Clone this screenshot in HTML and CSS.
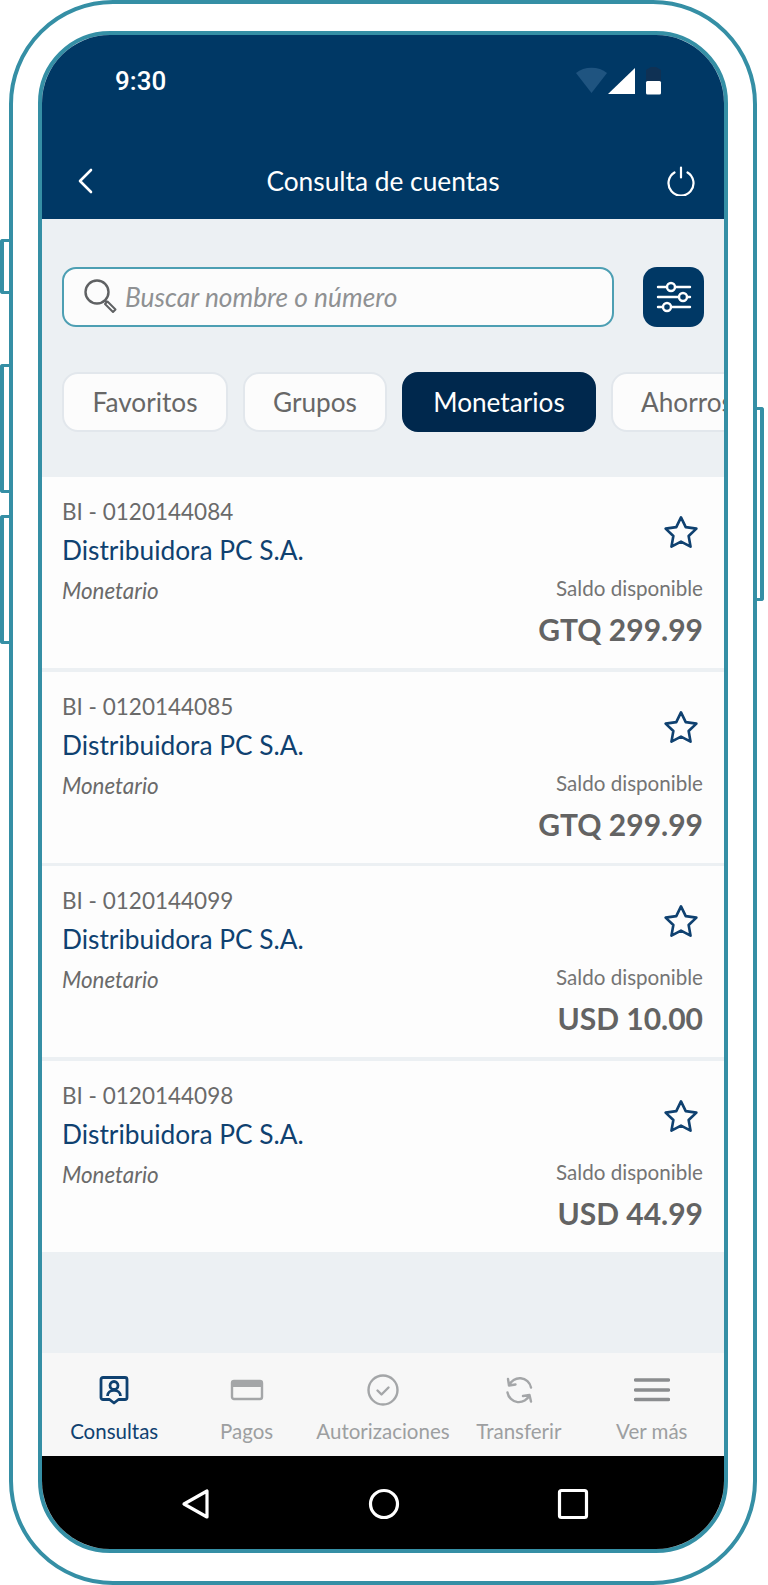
FILE: index.html
```html
<!DOCTYPE html>
<html lang="es">
<head>
    <meta charset="UTF-8">
    <meta name="viewport" content="width=device-width, initial-scale=1.0">
    <title>Consulta de cuentas</title>
    <link rel="stylesheet" href="styles.css">
</head>
<body>
    <div class="phone">
        <span class="side-btn side-left btn-a"></span>
        <span class="side-btn side-left btn-b"></span>
        <span class="side-btn side-left btn-c"></span>
        <span class="side-btn side-right btn-d"></span>

        <div class="screen">
            <header class="app-header">
                <div class="status-bar">
                    <span class="time">9:30</span>
                    <svg class="status-icons" width="87" height="28" viewBox="0 0 87 28">
                        <path d="M0 6C8-1 23-1 31 6L15.500 26Z" fill="#1f5480"/>
                        <path d="M59 1V27H32Z" fill="#fff"/>
                        <path d="M70 3l5-3h5l5 3v11H70Z" fill="#0f3154"/>
                        <rect x="70" y="14" width="15" height="13.500" rx="1.500" fill="#fff"/>
                    </svg>
                </div>
                <div class="toolbar">
                    <svg class="back-icon" width="18" height="26" viewBox="0 0 18 26"><path d="M14 2 3 13l11 11" fill="none" stroke="#fff" stroke-width="2.600" stroke-linecap="round" stroke-linejoin="round"/></svg>
                    <h1>Consulta de cuentas</h1>
                    <svg class="power-icon" width="30" height="30" viewBox="0 0 30 30"><path d="M8.500 6.500a12.500 12.500 0 1 0 13 0M15 1.500v10" fill="none" stroke="#fff" stroke-width="2.200" stroke-linecap="round"/></svg>
                </div>
            </header>

            <main class="content">
                <div class="search-row">
                    <div class="search-box">
                        <svg width="38" height="38" viewBox="0 0 38 38"><circle cx="15" cy="14" r="11.500" fill="none" stroke="#5f6163" stroke-width="2.400"/><path d="M23 22.500l2.500 2.500" fill="none" stroke="#5f6163" stroke-width="2.400"/><path d="M25.500 23.500l8 8-2.500 2.500-8-8Z" fill="#fff" stroke="#5f6163" stroke-width="2" stroke-linejoin="round"/></svg>
                        <span class="placeholder">Buscar nombre o número</span>
                    </div>
                    <button class="filter-btn">
                        <svg width="36" height="36" viewBox="0 0 36 36" fill="none" stroke="#fff" stroke-width="2.400" stroke-linecap="round">
                            <path d="M2 8h9M19 8h15M2 18h21M31 18h3M2 28h5M15 28h19"/>
                            <circle cx="15" cy="8" r="4"/><circle cx="27" cy="18" r="4"/><circle cx="11" cy="28" r="4"/>
                        </svg>
                    </button>
                </div>

                <div class="chips">
                    <span class="chip chip-fav">Favoritos</span>
                    <span class="chip chip-grp">Grupos</span>
                    <span class="chip chip-mon active">Monetarios</span>
                    <span class="chip chip-aho">Ahorros</span>
                </div>

                <div class="account-list">
                    <article class="account">
                        <div class="account-info">
                            <div class="account-code">BI - 0120144084</div>
                            <div class="account-name">Distribuidora PC S.A.</div>
                            <div class="account-type">Monetario</div>
                        </div>
                        <div class="account-side">
                            <svg class="star" width="36" height="34" viewBox="0 0 38 36"><path d="M19 2.500l5 10.300 11.300 1.600-8.200 7.900 2 11.200L19 28.200 8.900 33.500l2-11.200-8.200-7.900L14 12.800Z" fill="none" stroke="#0f4170" stroke-width="2.800" stroke-linejoin="round"/></svg>
                            <div class="balance-label">Saldo disponible</div>
                            <div class="balance">GTQ 299.99</div>
                        </div>
                    </article>
                    <article class="account">
                        <div class="account-info">
                            <div class="account-code">BI - 0120144085</div>
                            <div class="account-name">Distribuidora PC S.A.</div>
                            <div class="account-type">Monetario</div>
                        </div>
                        <div class="account-side">
                            <svg class="star" width="36" height="34" viewBox="0 0 38 36"><path d="M19 2.500l5 10.300 11.300 1.600-8.200 7.900 2 11.200L19 28.200 8.900 33.500l2-11.200-8.200-7.900L14 12.800Z" fill="none" stroke="#0f4170" stroke-width="2.800" stroke-linejoin="round"/></svg>
                            <div class="balance-label">Saldo disponible</div>
                            <div class="balance">GTQ 299.99</div>
                        </div>
                    </article>
                    <article class="account">
                        <div class="account-info">
                            <div class="account-code">BI - 0120144099</div>
                            <div class="account-name">Distribuidora PC S.A.</div>
                            <div class="account-type">Monetario</div>
                        </div>
                        <div class="account-side">
                            <svg class="star" width="36" height="34" viewBox="0 0 38 36"><path d="M19 2.500l5 10.300 11.300 1.600-8.200 7.900 2 11.200L19 28.200 8.900 33.500l2-11.200-8.200-7.900L14 12.800Z" fill="none" stroke="#0f4170" stroke-width="2.800" stroke-linejoin="round"/></svg>
                            <div class="balance-label">Saldo disponible</div>
                            <div class="balance">USD 10.00</div>
                        </div>
                    </article>
                    <article class="account">
                        <div class="account-info">
                            <div class="account-code">BI - 0120144098</div>
                            <div class="account-name">Distribuidora PC S.A.</div>
                            <div class="account-type">Monetario</div>
                        </div>
                        <div class="account-side">
                            <svg class="star" width="36" height="34" viewBox="0 0 38 36"><path d="M19 2.500l5 10.300 11.300 1.600-8.200 7.900 2 11.200L19 28.200 8.900 33.500l2-11.200-8.200-7.900L14 12.800Z" fill="none" stroke="#0f4170" stroke-width="2.800" stroke-linejoin="round"/></svg>
                            <div class="balance-label">Saldo disponible</div>
                            <div class="balance">USD 44.99</div>
                        </div>
                    </article>
                </div>
            </main>

            <nav class="tab-bar">
                <div class="tab active">
                    <svg width="36" height="36" viewBox="0 0 36 36" fill="none" stroke="#0f4170" stroke-width="2.800" stroke-linejoin="round"><path d="M7 5.500h22a2 2 0 0 1 2 2v18a2 2 0 0 1-2 2h-6.500L18 31l-4.500-3.500H7a2 2 0 0 1-2-2v-18a2 2 0 0 1 2-2Z"/><circle cx="18" cy="13.500" r="4"/><path d="M11.500 24c0-7.500 13-7.500 13 0"/></svg>
                    <span>Consultas</span>
                </div>
                <div class="tab tab-pagos">
                    <svg width="36" height="36" viewBox="0 0 36 36" fill="none" stroke="#a4a6a8" stroke-width="2.400" stroke-linejoin="round"><rect x="3" y="9" width="30" height="18" rx="2"/><path d="M3 12.500h30" stroke-width="5"/></svg>
                    <span>Pagos</span>
                </div>
                <div class="tab">
                    <svg width="36" height="36" viewBox="0 0 36 36" fill="none" stroke="#a4a6a8" stroke-width="2.400" stroke-linecap="round" stroke-linejoin="round"><circle cx="18" cy="18" r="14.500"/><path d="M12.500 18.500l4 4 7-7"/></svg>
                    <span>Autorizaciones</span>
                </div>
                <div class="tab tab-transfer">
                    <svg width="36" height="36" viewBox="0 0 36 36" fill="none" stroke="#a4a6a8" stroke-width="2.400" stroke-linecap="round" stroke-linejoin="round"><path d="M8 13.500A11.500 11.500 0 0 1 30 15.500M6.500 20.500A11.500 11.500 0 0 0 28.500 23M7 7l1 6.500 6.500-1M30 29.500l-1.500-6.500-6.500 1"/></svg>
                    <span>Transferir</span>
                </div>
                <div class="tab">
                    <svg width="36" height="36" viewBox="0 0 36 36" fill="none" stroke="#8b8d8f" stroke-width="3.400" stroke-linecap="round"><path d="M1.500 8h33M1.500 18h33M1.500 27.500h33"/></svg>
                    <span>Ver más</span>
                </div>
            </nav>

            <div class="system-nav">
                <svg width="30" height="32" viewBox="0 0 30 32"><path d="M26 3v26L3 16Z" fill="none" stroke="#fff" stroke-width="3.200" stroke-linejoin="round"/></svg>
                <svg width="32" height="32" viewBox="0 0 32 32"><circle cx="16" cy="16" r="13.500" fill="none" stroke="#fff" stroke-width="3.200"/></svg>
                <svg width="32" height="32" viewBox="0 0 32 32"><rect x="2.500" y="2.500" width="27" height="27" rx="2" fill="none" stroke="#fff" stroke-width="3.200"/></svg>
            </div>
        </div>
    </div>
</body>
</html>
```
FILE: styles.css
```css
* {
    box-sizing: border-box;
}

body {
    margin: 0;
    background: #fff;
    font-family: 'Lato', sans-serif;
}

.phone {
    position: relative;
    width: 748px;
    height: 1585px;
    margin-left: 9px;
    padding: 27px 25px 28px;
    border: 4px solid #358fa5;
    border-radius: 104px;
    background: #fff;
}

.side-btn {
    position: absolute;
    border: 3px solid #358fa5;
    background: #fff;
}

.side-left {
    left: -13px;
    width: 9px;
    border-left-width: 4px;
    border-right: none;
    border-radius: 3px 0 0 3px;
}

.side-right {
    right: -11px;
    width: 7px;
    border-right-width: 4px;
    border-left: none;
    border-radius: 0 3px 3px 0;
}

.btn-a { top: 235px; height: 55px; }
.btn-b { top: 360px; height: 129px; }
.btn-c { top: 511px; height: 129px; }
.btn-d { top: 403px; height: 194px; }

.screen {
    display: flex;
    flex-direction: column;
    height: 100%;
    border: 4px solid #358fa5;
    border-radius: 72px;
    overflow: hidden;
    background: #ecf0f3;
}

.app-header {
    height: 184px;
    flex-shrink: 0;
    background: #003865;
    color: #fff;
}

.status-bar {
    display: flex;
    justify-content: space-between;
    align-items: center;
    height: 92px;
    padding: 0 61px 0 73px;
}

.time {
    font-family: 'Roboto', sans-serif;
    font-size: 26px;
    font-weight: 500;
}

.toolbar {
    display: flex;
    justify-content: space-between;
    align-items: center;
    height: 92px;
    padding: 16px 28px 0 35px;
}

.toolbar h1 {
    margin: 0 0 0 5px;
    font-size: 26.300px;
    font-weight: 400;
}

.content {
    flex: 1;
    padding-top: 48px;
    overflow: hidden;
}

.search-row {
    display: flex;
    gap: 29px;
    padding: 0 20px;
}

.search-box {
    display: flex;
    align-items: center;
    gap: 5px;
    width: 552px;
    height: 60px;
    padding: 0 18px;
    border: 2px solid #4d9fb3;
    border-radius: 14px;
    background: #fcfcfc;
}

.placeholder {
    font-size: 26.300px;
    font-style: italic;
    color: #8f9193;
}

.filter-btn {
    display: flex;
    align-items: center;
    justify-content: center;
    width: 61px;
    height: 60px;
    padding: 0;
    border: none;
    border-radius: 14px;
    background: #003865;
}

.chips {
    display: flex;
    gap: 15px;
    margin-top: 45px;
    padding-left: 20px;
    white-space: nowrap;
}

.chip {
    flex-shrink: 0;
    height: 60px;
    border: 2px solid #e2e7ec;
    border-radius: 16px;
    background: #fcfcfc;
    font-size: 26.200px;
    line-height: 56px;
    text-align: center;
    color: #676767;
}

.chip-fav { width: 166px; }
.chip-grp { width: 144px; }
.chip-mon { width: 194px; }
.chip-aho { width: 152px; }

.chip.active {
    border-color: #00284d;
    background: #00284d;
    color: #fff;
}

.account-list {
    margin-top: 45px;
}

.account {
    display: flex;
    justify-content: space-between;
    height: 191px;
    margin-bottom: 3.500px;
    padding: 20px 21px 0 20px;
    background: #fdfdfd;
}

.account:last-child {
    margin-bottom: 0;
}

.account-code {
    font-size: 22.500px;
    line-height: 30px;
    color: #6a6a6a;
}

.account-name {
    margin-top: 5px;
    font-size: 26.300px;
    line-height: 36px;
    color: #0f4170;
}

.account-type {
    margin-top: 8px;
    font-size: 22.400px;
    font-style: italic;
    line-height: 30px;
    color: #6a6a6a;
}

.account-side {
    display: flex;
    flex-direction: column;
    align-items: flex-end;
}

.star {
    margin: 18px 4px 0 0;
}

.balance-label {
    margin-top: 24px;
    font-size: 20.600px;
    line-height: 30px;
    color: #747474;
}

.balance {
    margin-top: 6px;
    font-size: 30px;
    font-weight: 700;
    line-height: 40px;
    color: #636363;
}

.tab-bar {
    display: grid;
    grid-template-columns: repeat(5, 1fr);
    flex-shrink: 0;
    height: 103px;
    padding: 0 5px;
    background: #f7f7f7;
}

.tab {
    display: flex;
    flex-direction: column;
    align-items: center;
    padding-top: 19px;
    font-size: 20.500px;
    white-space: nowrap;
    color: #9d9fa1;
}

.tab span {
    margin-top: 10px;
    line-height: 26px;
}

.tab.active {
    color: #0f4170;
}

.tab-pagos {
    padding-right: 4px;
}

.tab-transfer {
    padding-left: 3px;
}

.system-nav {
    display: flex;
    justify-content: center;
    align-items: center;
    gap: 157px;
    flex: 0 0 93px;
    padding: 2px 0 0 4px;
    background: #000;
}
```
